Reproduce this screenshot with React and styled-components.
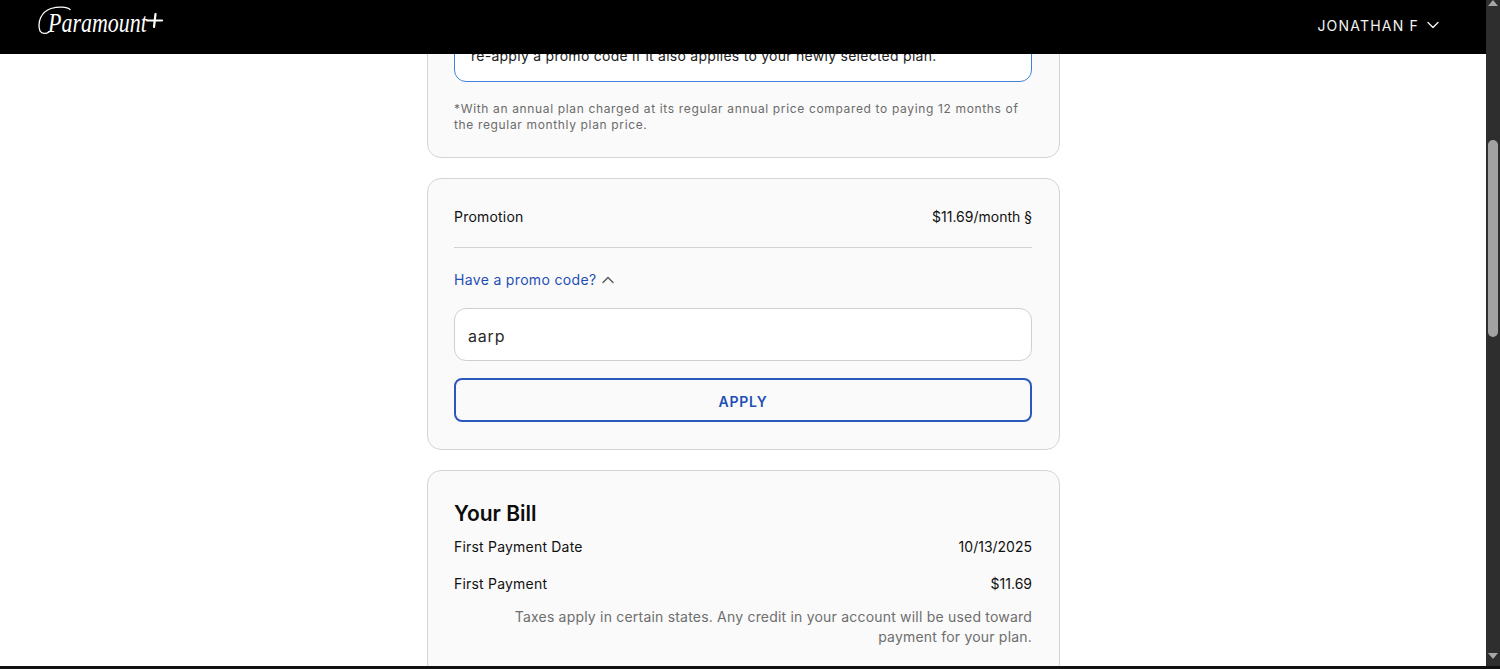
import React from "react";
import styled, { createGlobalStyle } from "styled-components";
import { ChevronDown, ChevronUp } from "lucide-react";

const BODY_FONT = '"Inter", "Noto Sans", sans-serif';

const GlobalStyle = createGlobalStyle`
  html, body {
    margin: 0;
    height: 100%;
    overflow: hidden;
    background: #fff;
  }
  * { box-sizing: border-box; }
`;

//#region Styled Components

const Frame = styled.div`
  height: 669px;
  display: flex;
  padding-bottom: 3px;
  background: #111;
  font-family: ${BODY_FONT};
`;

const Main = styled.div`
  flex: 1;
  min-width: 0;
  display: flex;
  flex-direction: column;
  background: #fff;
`;

const Header = styled.header`
  height: 54px;
  flex: none;
  background: #000;
  display: flex;
  align-items: flex-start;
  justify-content: space-between;
  padding: 0 43px 0 38px;
  position: relative;
  z-index: 1;
`;

const LogoMark = styled.svg`
  display: block;
  width: 126px;
  height: 40px;
`;

const UserMenu = styled.div`
  display: flex;
  align-items: center;
  gap: 4px;
  height: 50px;
  color: #f4f4f4;
  font-size: 14px;
  letter-spacing: 1.2px;
`;

const Viewport = styled.main`
  flex: 1;
  min-height: 0;
  overflow: hidden;
  padding-left: 1px;
`;

const Stack = styled.div`
  width: 633px;
  margin: -44px auto 0;
  display: flex;
  flex-direction: column;
  gap: 20px;
`;

const Card = styled.section`
  background: #fafafa;
  border: 1px solid #d4d4d6;
  border-radius: 14px;
  padding: ${props => props.$padding};
`;

const Notice = styled.div`
  background: #fff;
  border: 1px solid #3f83dc;
  border-radius: 12px;
  padding: 34px 16px 15px;
  color: #1c1c1c;
  font-size: 14px;
  line-height: 20px;
  letter-spacing: 0.26px;
`;

const Footnote = styled.p`
  margin: 19px 0 0;
  color: #6b6b6b;
  font-size: 12px;
  line-height: 16px;
  letter-spacing: 0.65px;
`;

const Row = styled.div`
  display: flex;
  align-items: center;
  justify-content: space-between;
  color: #111;
  font-size: 14px;
  line-height: 20px;
  letter-spacing: 0.2px;
  margin-top: ${props => props.$top || 0}px;
`;

const RowValue = styled.span`
  letter-spacing: 0;
`;

const Divider = styled.hr`
  margin: 20px 0 0;
  border: 0;
  border-top: 1px solid #d2d2d4;
`;

const PromoToggle = styled.div`
  display: flex;
  align-items: center;
  gap: 2px;
  height: 20px;
  margin-top: 22px;
  color: #1f4fb5;
  font-size: 14px;
  line-height: 20px;
  letter-spacing: 0.33px;

  svg { color: #555; }
`;

const PromoInput = styled.input`
  display: block;
  width: 100%;
  height: 53px;
  margin-top: 18px;
  padding: 2px 13px 0;
  border: 1px solid #cfcfd1;
  border-radius: 12px;
  background: #fff;
  color: #2a2a2a;
  font-family: ${BODY_FONT};
  font-size: 16px;
  letter-spacing: 0.8px;
  outline: none;
`;

const ApplyButton = styled.button`
  display: block;
  width: 100%;
  height: 44px;
  margin-top: 17px;
  padding: 2px 0 0;
  border: 2px solid #2c58bc;
  border-radius: 8px;
  background: transparent;
  color: #1f4fb5;
  font-family: ${BODY_FONT};
  font-size: 14px;
  font-weight: 600;
  letter-spacing: 0.8px;
`;

const BillTitle = styled.h2`
  margin: 0;
  color: #0c0c0c;
  font-size: 21px;
  line-height: 26px;
  font-weight: 600;
`;

const TaxNote = styled.p`
  margin: 13px 0 0 auto;
  max-width: 530px;
  text-align: right;
  color: #6e6e6e;
  font-size: 14px;
  line-height: 20px;
  letter-spacing: 0.2px;
`;

const Scrollbar = styled.div`
  width: 14px;
  flex: none;
  background: #2e2e2e;
  display: flex;
  flex-direction: column;
  align-items: center;
  position: relative;
  z-index: 2;
`;

const ScrollArrow = styled.div`
  width: 0;
  height: 0;
  flex: none;
  border-left: 5px solid transparent;
  border-right: 5px solid transparent;
  margin-top: ${props => props.$top}px;
  ${props => props.$down
    ? "border-top: 6px solid #a6a6a6;"
    : "border-bottom: 6px solid #a6a6a6;"}
`;

const ScrollThumb = styled.div`
  width: 10px;
  height: 197px;
  flex: none;
  margin-top: 134px;
  border-radius: 5px;
  background: #a2a2a2;
`;

//#endregion

const Logo = () => (
  <LogoMark viewBox="0 0 126 40" aria-label="Paramount+">
    <text
      transform="translate(10 32) scale(1 1.2)"
      fill="#fff"
      fontFamily='"Liberation Serif", serif'
      fontStyle="italic"
      fontSize="22"
    >
      Paramount
    </text>
    <path
      d="M2 31c2 3 6 3 9 1M2 31C-1 22 3 12 13 8.500c7-2 16-2 19 1"
      fill="none"
      stroke="#fff"
      strokeWidth="1.300"
      strokeLinecap="round"
    />
    <path d="M109 20.500h15M117.500 14l-1.500 13" stroke="#fff" strokeWidth="2.200" strokeLinecap="round" />
  </LogoMark>
);

const App = () => (
  <Frame>
    <GlobalStyle />
    <Main>
      <Header>
        <Logo />
        <UserMenu>
          JONATHAN F
          <ChevronDown size={20} strokeWidth={1.6} />
        </UserMenu>
      </Header>

      <Viewport>
        <Stack>
          <Card $padding="0 27px 24px 26px">
            <Notice>re-apply a promo code if it also applies to your newly selected plan.</Notice>
            <Footnote>
              *With an annual plan charged at its regular annual price compared to paying 12 months of
              the regular monthly plan price.
            </Footnote>
          </Card>

          <Card $padding="28px 27px 27px 26px">
            <Row>
              <span>Promotion</span>
              <RowValue>$11.69/month §</RowValue>
            </Row>
            <Divider />
            <PromoToggle>
              Have a promo code?
              <ChevronUp size={20} strokeWidth={1.6} />
            </PromoToggle>
            <PromoInput defaultValue="aarp" />
            <ApplyButton>APPLY</ApplyButton>
          </Card>

          <Card $padding="30px 27px 30px 26px">
            <BillTitle>Your Bill</BillTitle>
            <Row $top={10}>
              <span>First Payment Date</span>
              <RowValue>10/13/2025</RowValue>
            </Row>
            <Row $top={17}>
              <span>First Payment</span>
              <RowValue>$11.69</RowValue>
            </Row>
            <TaxNote>
              Taxes apply in certain states. Any credit in your account will be used toward payment for
              your plan.
            </TaxNote>
          </Card>
        </Stack>
      </Viewport>
    </Main>

    <Scrollbar>
      <ScrollArrow $top={0} />
      <ScrollThumb />
      <ScrollArrow $down $top={316} />
    </Scrollbar>
  </Frame>
);

export default App;
